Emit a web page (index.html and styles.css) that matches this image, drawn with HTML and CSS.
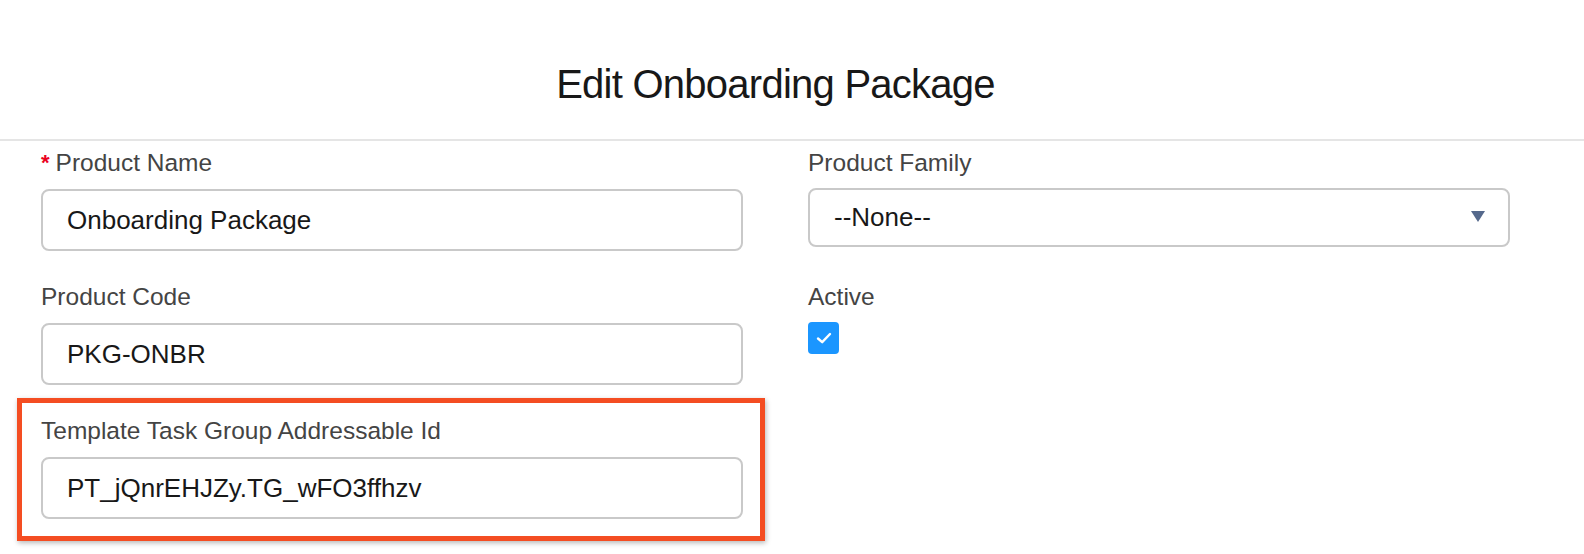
FILE: index.html
```html
<!DOCTYPE html>
<html lang="en">
<head>
<meta charset="utf-8">
<title>Edit Onboarding Package</title>
<link rel="stylesheet" href="styles.css">
</head>
<body>
  <header class="modal-header">
    <h1 class="modal-title">Edit Onboarding Package</h1>
  </header>
  <form class="form">
    <div class="field">
      <label class="field-label"><abbr class="required" title="required">*</abbr>Product Name</label>
      <input class="text-input" type="text" value="Onboarding Package">
    </div>
    <div class="field">
      <label class="field-label">Product Family</label>
      <div class="select">
        <span class="select-value">--None--</span>
        <svg class="select-arrow" width="14" height="11" viewBox="0 0 14 11"><polygon points="0,0 14,0 7,11" fill="#55698c"/></svg>
      </div>
    </div>
    <div class="field">
      <label class="field-label">Product Code</label>
      <input class="text-input" type="text" value="PKG-ONBR">
    </div>
    <div class="field">
      <label class="field-label">Active</label>
      <span class="checkbox">
        <svg width="18" height="16" viewBox="0 0 18 16"><polyline points="3,8.5 7.2,12.2 15,4" fill="none" stroke="#ffffff" stroke-width="2.4" stroke-linecap="round" stroke-linejoin="round"/></svg>
      </span>
    </div>
    <div class="field field-highlight">
      <label class="field-label">Template Task Group Addressable Id</label>
      <input class="text-input" type="text" value="PT_jQnrEHJZy.TG_wFO3ffhzv">
    </div>
  </form>
</body>
</html>
```

FILE: styles.css
```css
html, body {
  margin: 0;
  padding: 0;
  background: #ffffff;
}

body {
  font-family: "Liberation Sans", Arial, sans-serif;
  color: #181818;
  min-height: 554px;
}

.modal-header {
  padding: 60px 0 31px 0;
  width: 100%;
  border-bottom: 2px solid #e5e5e5;
}

.modal-title {
  margin: 0;
  width: 1551px;
  text-align: center;
  font-size: 40px;
  line-height: 48px;
  font-weight: 400;
  letter-spacing: -0.75px;
  color: #181818;
}

.form {
  display: grid;
  grid-template-columns: 702px 702px;
  column-gap: 65px;
  row-gap: 31px;
  padding: 7px 0 35px 41px;
  margin: 0;
}

.field {
  display: flex;
  flex-direction: column;
  align-items: flex-start;
}

.field-label {
  display: block;
  font-size: 24.5px;
  line-height: 30px;
  color: #444444;
  margin-bottom: 11px;
}

.required {
  text-decoration: none;
  border: 0;
  color: #ea001e;
  font-size: 22px;
  font-weight: 700;
  margin-right: 6px;
  vertical-align: 1px;
}

.text-input {
  box-sizing: border-box;
  width: 100%;
  height: 62px;
  margin: 0;
  padding: 0 24px;
  border: 2px solid #c9c9c9;
  border-radius: 8px;
  background: #ffffff;
  font-family: "Liberation Sans", Arial, sans-serif;
  font-size: 26px;
  color: #181818;
  outline: none;
}

.select {
  box-sizing: border-box;
  width: 100%;
  height: 59px;
  margin-top: -1px;
  padding: 0 23px 0 24px;
  border: 2px solid #c9c9c9;
  border-radius: 8px;
  display: flex;
  align-items: center;
  justify-content: space-between;
  font-size: 26px;
  color: #181818;
}

.select-arrow {
  display: block;
  margin-top: -3px;
}

.checkbox {
  box-sizing: border-box;
  width: 31px;
  height: 32px;
  margin-top: -1px;
  border-radius: 4px;
  background: #1b96ff;
  display: flex;
  align-items: center;
  justify-content: center;
}

.checkbox svg {
  display: block;
}

.field-highlight {
  position: relative;
}

.field-highlight::after {
  content: "";
  position: absolute;
  top: -18px;
  left: -24px;
  right: -22px;
  bottom: -22px;
  border: 5px solid #f44d22;
  box-shadow: 1px 2px 5px rgba(0, 0, 0, 0.28);
  pointer-events: none;
}
```
